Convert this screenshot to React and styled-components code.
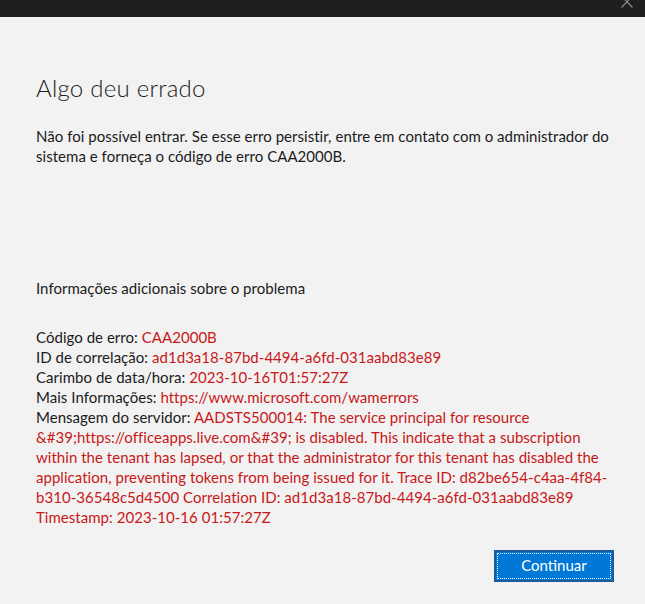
import React from 'react'
import styled, {createGlobalStyle} from 'styled-components';

const details = [
    {label: 'Código de erro:', value: ['CAA2000B']},
    {label: 'ID de correlação:', value: ['ad1d3a18-87bd-4494-a6fd-031aabd83e89']},
    {label: 'Carimbo de data/hora:', value: ['2023-10-16T01:57:27Z']},
    {label: 'Mais Informações:', value: ['https://www.microsoft.com/wamerrors']},
    {
        label: 'Mensagem do servidor:',
        value: [
            'AADSTS500014: The service principal for resource',
            '&#39;https://officeapps.live.com&#39; is disabled. This indicate that a subscription',
            'within the tenant has lapsed, or that the administrator for this tenant has disabled the',
            'application, preventing tokens from being issued for it. Trace ID: d82be654-c4aa-4f84-',
            'b310-36548c5d4500 Correlation ID: ad1d3a18-87bd-4494-a6fd-031aabd83e89',
            'Timestamp: 2023-10-16 01:57:27Z'
        ]
    }
]

const GlobalStyle = createGlobalStyle`
    html, body {
        margin: 0;
        padding: 0;
        background: #f2f2f2;
    }
    body {
        font-family: "Segoe UI", Lato, "Liberation Sans", sans-serif;
        color: #1b1b1b;
        letter-spacing: 0.035px;
    }
`

const StyledWindow = styled.div`
    height: 604px;
    display: flex;
    flex-direction: column;
    background: #f2f2f2;
    overflow: hidden;
`
const StyledTitleBar = styled.div`
    height: 17px;
    flex: none;
    background: #1f1f1f;
    display: flex;
    justify-content: flex-end;
    align-items: flex-start;
    padding-right: 11px;
    overflow: hidden;
`
const StyledBody = styled.div`
    padding: 0 31px 0 36px;
    display: flex;
    flex-direction: column;
`
const StyledTitle = styled.h1`
    margin: 55px 0 0;
    font-size: 24px;
    line-height: 32px;
    font-weight: 300;
    letter-spacing: 0.25px;
`
const StyledLead = styled.p`
    margin: 22px 0 0;
    font-size: 15px;
    line-height: 20px;
`
const StyledHeading = styled.h2`
    margin: 112px 0 0;
    font-size: 15px;
    line-height: 20px;
    font-weight: 400;
`
const StyledList = styled.div`
    margin-top: 29px;
    font-size: 15px;
    line-height: 20px;
`
const StyledValue = styled.span`
    color: #c81818;
`
const StyledFooter = styled.div`
    margin-top: 23px;
    display: flex;
    justify-content: flex-end;
`
const StyledButton = styled.button`
    width: 120px;
    height: 32px;
    border: 2px solid #1d5a98;
    background: #0078d7;
    color: #fff;
    font-family: inherit;
    font-size: 15px;
    padding: 0 0 2px;
    outline: 1px dotted #fff;
    outline-offset: -4px;
    cursor: pointer;
`

const CloseGlyph = () => (
    <svg width="14" height="17" viewBox="0 0 14 17">
        <path d="M1.5 -4 L12.5 7.5 M12.5 -4 L1.5 7.5" stroke="#8c8c8c" strokeWidth="1.2" fill="none"/>
    </svg>
)

const App = () => {
    return(
        <StyledWindow>
            <GlobalStyle/>
            <StyledTitleBar>
                <CloseGlyph/>
            </StyledTitleBar>
            <StyledBody>
                <StyledTitle>Algo deu errado</StyledTitle>
                <StyledLead>
                    Não foi possível entrar. Se esse erro persistir, entre em contato com o administrador do<br/>
                    sistema e forneça o código de erro CAA2000B.
                </StyledLead>
                <StyledHeading>Informações adicionais sobre o problema</StyledHeading>
                <StyledList>
                    {details.map((item, index) =>
                        <div key={index}>
                            {item.label}{' '}
                            <StyledValue>
                                {item.value.map((line, i) =>
                                    <React.Fragment key={i}>
                                        {i > 0 && <br/>}
                                        {line}
                                    </React.Fragment>
                                )}
                            </StyledValue>
                        </div>
                    )}
                </StyledList>
                <StyledFooter>
                    <StyledButton>Continuar</StyledButton>
                </StyledFooter>
            </StyledBody>
        </StyledWindow>
    )
}
export default App;
